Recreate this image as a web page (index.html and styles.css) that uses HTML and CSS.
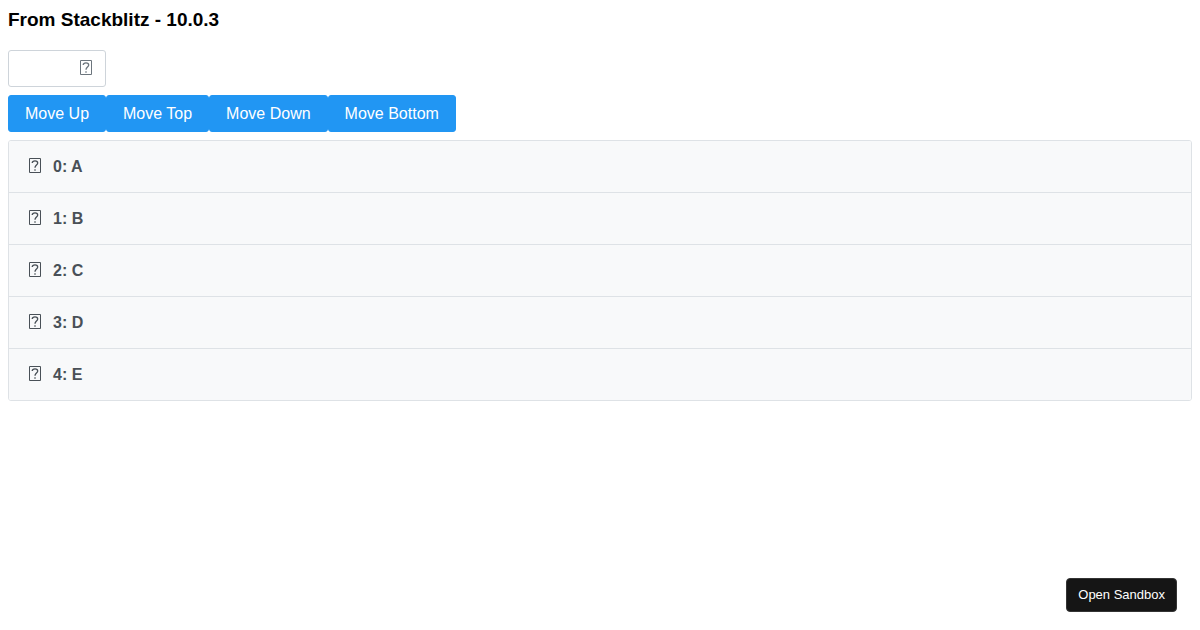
FILE: index.html
```html
<!DOCTYPE html>
<html lang="en">
<head>
  <meta charset="UTF-8" />
  <meta name="viewport" content="width=device-width, initial-scale=1.0"/>
  <title>From Stackblitz</title>
  <link rel="stylesheet" href="styles.css">
</head>
<body>

  <svg class="sprite" aria-hidden="true">
    <symbol id="glyph" viewBox="0 0 13 17">
      <path d="M.5 .5h11v14h-11z" fill="none" stroke="currentColor"/>
      <path d="M3.2 5C3.3 3.6 4.4 2.8 6 2.8C7.6 2.8 8.7 3.7 8.7 5C8.7 7 6 7.2 6 9.8M6 11.2v1.5" fill="none" stroke="currentColor" stroke-width="1.3"/>
    </symbol>
  </svg>

  <h3>From Stackblitz - 10.0.3</h3>

  <div class="dropdown">
    <select aria-label="Select item"></select>
    <svg class="icon" aria-hidden="true"><use href="#glyph"/></svg>
  </div>

  <div class="toolbar">
    <button type="button">Move Up</button>
    <button type="button">Move Top</button>
    <button type="button">Move Down</button>
    <button type="button">Move Bottom</button>
  </div>

  <!-- Accordion -->
  <div class="accordion">
    <button type="button" class="tab" aria-expanded="false"><svg class="icon" aria-hidden="true"><use href="#glyph"/></svg>0: A</button>
    <button type="button" class="tab" aria-expanded="false"><svg class="icon" aria-hidden="true"><use href="#glyph"/></svg>1: B</button>
    <button type="button" class="tab" aria-expanded="false"><svg class="icon" aria-hidden="true"><use href="#glyph"/></svg>2: C</button>
    <button type="button" class="tab" aria-expanded="false"><svg class="icon" aria-hidden="true"><use href="#glyph"/></svg>3: D</button>
    <button type="button" class="tab" aria-expanded="false"><svg class="icon" aria-hidden="true"><use href="#glyph"/></svg>4: E</button>
  </div>

  <button type="button" class="open-sandbox">Open Sandbox</button>

</body>
</html>
```
FILE: styles.css
```css
* {
  box-sizing: border-box;
}

body {
  margin: 8px;
  font-family: "Liberation Sans", Helvetica, Arial, sans-serif;
  font-size: 16px;
  background: #fff;
  color: #000;
}

.sprite {
  display: none;
}

h3 {
  margin: 0 0 18px;
  font-size: 19px;
  line-height: 24px;
}

button {
  font-family: inherit;
  cursor: pointer;
}

.icon {
  width: 13px;
  height: 17px;
  color: #495057;
}

.dropdown {
  display: grid;
  width: 98px;
  height: 37px;
  align-items: center;
  border: 1px solid #ced4da;
  border-radius: 3px;
}

.dropdown select,
.dropdown .icon {
  grid-area: 1 / 1;
}

.dropdown select {
  appearance: none;
  width: 100%;
  height: 100%;
  padding: 8px;
  border: none;
  background: transparent;
  font-size: 16px;
}

.dropdown .icon {
  justify-self: end;
  margin-right: 12px;
  color: #6c757d;
  pointer-events: none;
}

.toolbar {
  display: flex;
  margin: 8px 0;
}

.toolbar button {
  padding: 8px 16px;
  border: 1px solid #2196f3;
  border-radius: 3px;
  background: #2196f3;
  color: #fff;
  font-size: 16px;
  line-height: 19px;
}

.accordion {
  display: flex;
  flex-direction: column;
  border: 1px solid #dee2e6;
  border-radius: 3px;
  overflow: hidden;
}

.tab {
  display: flex;
  align-items: center;
  gap: 11px;
  padding: 16px 20px;
  border: none;
  background: #f8f9fa;
  color: #495057;
  font-size: 16px;
  font-weight: bold;
  line-height: 19px;
}

.tab + .tab {
  border-top: 1px solid #dee2e6;
}

.open-sandbox {
  position: fixed;
  right: 23px;
  bottom: 18px;
  padding: 8px 11px;
  border: 1px solid #343434;
  border-radius: 4px;
  background: #151515;
  color: #fff;
  font-size: 13px;
  line-height: 16px;
}
```
